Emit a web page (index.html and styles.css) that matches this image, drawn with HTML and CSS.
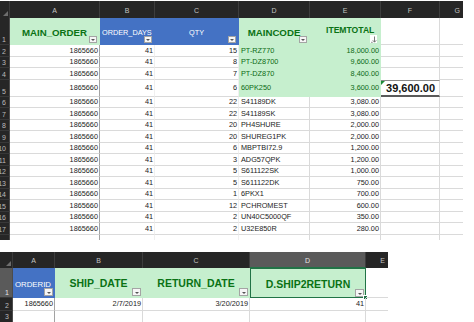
FILE: index.html
```html
<!DOCTYPE html>
<html>
<head>
<meta charset="utf-8">
<link rel="stylesheet" href="styles.css">
</head>
<body>
<div class="sheet top">
  <div class="corner"></div>
  <div class="ch">A</div><div class="ch">B</div><div class="ch">C</div><div class="ch">D</div><div class="ch">E</div><div class="ch">F</div><div class="ch chend">G</div>

  <div class="rh"><span>1</span></div>
  <div class="c g hdr colA">MAIN_ORDER<i class="drop"></i></div>
  <div class="c bl lbl">ORDER_DAYS<i class="drop"></i></div>
  <div class="c bl lbl ctr">QTY<i class="drop"></i></div>
  <div class="c g hdr">MAINCODE<i class="drop"></i></div>
  <div class="c g hdr small">ITEMTOTAL<i class="sort"><svg width="6" height="7" viewBox="0 0 6 7"><path d="M3.5 0.5V6M1.8 4.3L3.5 6.2L5.2 4.3M0.2 6.3H1.6" stroke="#6b6b6b" stroke-width="0.9" fill="none"/></svg></i></div>
  <div class="c"></div><div class="c end"></div>

  <div class="rh"><span>2</span></div>
  <div class="c num colA">1865660</div><div class="c num fa">41</div><div class="c num fa">15</div><div class="c g">PT-RZ770</div><div class="c g num">18,000.00</div><div class="c"></div><div class="c end"></div>

  <div class="rh"><span>3</span></div>
  <div class="c num colA">1865660</div><div class="c num fa">41</div><div class="c num fa">8</div><div class="c g">PT-DZ8700</div><div class="c g num">9,600.00</div><div class="c"></div><div class="c end"></div>

  <div class="rh"><span>4</span></div>
  <div class="c num colA">1865660</div><div class="c num fa">41</div><div class="c num fa">7</div><div class="c g">PT-DZ870</div><div class="c g num">8,400.00</div><div class="c fbot"></div><div class="c end"></div>

  <div class="rh"><span>5</span></div>
  <div class="c num colA">1865660</div><div class="c num fa">41</div><div class="c num fa">6</div><div class="c g">60PK250</div><div class="c g num">3,600.00</div><div class="c num total"><i class="tri"></i>39,600.00</div><div class="c end"></div>

  <div class="rh"><span>6</span></div>
  <div class="c num colA">1865660</div><div class="c num fa">41</div><div class="c num fa">22</div><div class="c">S41189DK</div><div class="c num">3,080.00</div><div class="c"></div><div class="c end"></div>

  <div class="rh"><span>7</span></div>
  <div class="c num colA">1865660</div><div class="c num fa">41</div><div class="c num fa">22</div><div class="c">S41189SK</div><div class="c num">3,080.00</div><div class="c"></div><div class="c end"></div>

  <div class="rh"><span>8</span></div>
  <div class="c num colA">1865660</div><div class="c num fa">41</div><div class="c num fa">20</div><div class="c">PH4SHURE</div><div class="c num">2,000.00</div><div class="c"></div><div class="c end"></div>

  <div class="rh"><span>9</span></div>
  <div class="c num colA">1865660</div><div class="c num fa">41</div><div class="c num fa">20</div><div class="c">SHUREG1PK</div><div class="c num">2,000.00</div><div class="c"></div><div class="c end"></div>

  <div class="rh"><span>10</span></div>
  <div class="c num colA">1865660</div><div class="c num fa">41</div><div class="c num fa">6</div><div class="c">MBPTBI72.9</div><div class="c num">1,200.00</div><div class="c"></div><div class="c end"></div>

  <div class="rh"><span>11</span></div>
  <div class="c num colA">1865660</div><div class="c num fa">41</div><div class="c num fa">3</div><div class="c">ADG57QPK</div><div class="c num">1,200.00</div><div class="c"></div><div class="c end"></div>

  <div class="rh"><span>12</span></div>
  <div class="c num colA">1865660</div><div class="c num fa">41</div><div class="c num fa">5</div><div class="c">S611122SK</div><div class="c num">1,000.00</div><div class="c"></div><div class="c end"></div>

  <div class="rh"><span>13</span></div>
  <div class="c num colA">1865660</div><div class="c num fa">41</div><div class="c num fa">5</div><div class="c">S611122DK</div><div class="c num">750.00</div><div class="c"></div><div class="c end"></div>

  <div class="rh"><span>14</span></div>
  <div class="c num colA">1865660</div><div class="c num fa">41</div><div class="c num fa">1</div><div class="c">6PKX1</div><div class="c num">700.00</div><div class="c"></div><div class="c end"></div>

  <div class="rh"><span>15</span></div>
  <div class="c num colA">1865660</div><div class="c num fa">41</div><div class="c num fa">12</div><div class="c">PCHROMEST</div><div class="c num">600.00</div><div class="c"></div><div class="c end"></div>

  <div class="rh"><span>16</span></div>
  <div class="c num colA">1865660</div><div class="c num fa">41</div><div class="c num fa">2</div><div class="c">UN40C5000QF</div><div class="c num">350.00</div><div class="c"></div><div class="c end"></div>

  <div class="rh"><span>17</span></div>
  <div class="c num colA">1865660</div><div class="c num fa">41</div><div class="c num fa">2</div><div class="c">U32E850R</div><div class="c num">280.00</div><div class="c"></div><div class="c end"></div>

  <div class="rh rhcut"></div>
  <div class="c colA nb"></div><div class="c fa nb"></div><div class="c fa nb"></div><div class="c nb"></div><div class="c nb"></div><div class="c nb"></div><div class="c end nb"></div>
</div>

<div class="sheet bottom">
  <div class="corner"></div>
  <div class="ch">A</div><div class="ch">B</div><div class="ch">C</div><div class="ch sel">D</div><div class="ch chend">E</div>

  <div class="rh rhsel"><span>1</span></div>
  <div class="c bl lbl lbl2">ORDERID<i class="drop big"></i></div>
  <div class="c g hdr hdr2">SHIP_DATE<i class="drop big"></i></div>
  <div class="c g hdr hdr2">RETURN_DATE<i class="drop big"></i></div>
  <div class="c g hdr hdr2 active">D.SHIP2RETURN<i class="drop big"></i><i class="handle"></i></div>
  <div class="c end"></div>

  <div class="rh"><span>2</span></div>
  <div class="c num colA">1865660</div><div class="c num">2/7/2019</div><div class="c num">3/20/2019</div><div class="c num">41</div><div class="c end"></div>

  <div class="rh rhlast"><span>3</span></div>
  <div class="c colA nb"></div><div class="c nb"></div><div class="c nb"></div><div class="c nb"></div><div class="c end nb"></div>
</div>
</body>
</html>
```
FILE: styles.css
```css
html, body {
  margin: 0;
  padding: 0;
  background: #ffffff;
}

body {
  font-family: "Liberation Sans", Arial, sans-serif;
  color: #1c1c1c;
}

.sheet {
  display: grid;
  box-sizing: border-box;
}

.top {
  margin-top: 1px;
  width: 463px;
  grid-template-columns: 10px 90px 55px 84px 71px 71px 59px 23px;
  grid-template-rows: 17px 27px 12px 11px 12px 17px repeat(6, 11px 12px) 5px;
}

.bottom {
  margin-top: 12px;
  width: 388px;
  grid-template-columns: 13px 42px 88px 107px 116px 22px;
  grid-template-rows: 16px 30px 13px 11px;
}

/* header bar */
.corner {
  background: #262626;
  position: relative;
  border-right: 1px solid #3a3a3a;
  box-sizing: border-box;
}
.corner::after {
  content: "";
  position: absolute;
  right: 1px;
  bottom: 2px;
  width: 0;
  height: 0;
  border-left: 5px solid transparent;
  border-bottom: 5px solid #6d6d6d;
}

.ch {
  background: #262626;
  color: #c4c4c4;
  font-size: 7px;
  display: flex;
  align-items: center;
  justify-content: center;
  border-right: 1px solid #3d3d3d;
  box-sizing: border-box;
  padding-top: 1px;
}
.ch.chend {
  justify-content: flex-end;
  padding-right: 3px;
  border-right: none;
}
.ch.sel {
  background: #5a5a5a;
  color: #e6e6e6;
  border-bottom: 1px solid #217346;
}

/* row header strip */
.rh {
  background: #262626;
  color: #bcbcbc;
  font-size: 7px;
  display: flex;
  align-items: flex-end;
  justify-content: flex-end;
  padding: 0 3px 1px 2px;
  overflow: hidden;
  box-sizing: border-box;
  border-bottom: 1px solid #383838;
  border-right: 1px solid #4c4c4c;
  line-height: 1;
}
.rh span {
  white-space: nowrap;
}
.rh.rhcut {
  border-bottom: none;
}
.rh.rhlast {
  align-items: center;
  border-bottom: none;
  padding-bottom: 0;
}
.rhsel {
  background: #5a5a5a;
  color: #e6e6e6;
}

/* cells */
.c {
  box-sizing: border-box;
  border-right: 1px solid #dadada;
  border-bottom: 1px solid #dadada;
  font-size: 7.3px;
  display: flex;
  align-items: center;
  padding: 0 2px 0 2px;
  white-space: nowrap;
  overflow: hidden;
  position: relative;
  line-height: 1;
}
.c.num {
  justify-content: flex-end;
  padding-right: 1px;
}
.c.colA {
  border-right-color: #a3a3a3;
}
.c.fa {
  border-right-color: #f0f0f0;
}
.c.end {
  border-right: none;
}
.c.nb {
  border-bottom: none;
}

.g {
  background: #c6efce;
  color: #0b6b14;
  border-color: #c6efce !important;
}
.bl {
  background: #4472c4;
  color: #ffffff;
  border-color: #4472c4 !important;
}
.hdr {
  font-weight: bold;
  font-size: 9.7px;
  justify-content: center;
  padding-top: 3px;
  color: #0a7215;
}
.hdr.small {
  font-size: 8.6px;
  padding-top: 0;
  padding-left: 16px;
  padding-bottom: 1px;
  justify-content: flex-start;
}
.hdr2 {
  font-size: 10.5px;
  padding-top: 2px;
}
.lbl {
  font-size: 7.3px;
  padding-top: 3px;
  padding-left: 2px;
}
.lbl.ctr {
  justify-content: center;
}
.lbl2 {
  font-size: 7.8px;
  padding-top: 4px;
  padding-left: 2px;
}

.active {
  border: 1px solid #217346 !important;
  overflow: visible;
}
.handle {
  position: absolute;
  right: -3px;
  bottom: -3px;
  width: 3px;
  height: 3px;
  background: #217346;
  border: 1px solid #ffffff;
}

/* filter dropdown buttons */
.drop {
  position: absolute;
  right: 2px;
  bottom: 1px;
  width: 8px;
  height: 7px;
  box-sizing: border-box;
  background: #f6f6f6;
  border: 1px solid #a4a4a4;
}
.drop::after {
  content: "";
  position: absolute;
  left: 1px;
  top: 2px;
  width: 0;
  height: 0;
  border-left: 2px solid transparent;
  border-right: 2px solid transparent;
  border-top: 2px solid #555555;
}
.drop.big {
  width: 9px;
  height: 8px;
  right: 1px;
  bottom: 1px;
}
.drop.big::after {
  left: 1.5px;
  top: 2.5px;
}
.active .drop.big {
  right: 1px;
  bottom: 0px;
}

.sort {
  position: absolute;
  right: 3px;
  bottom: 1px;
  width: 7px;
  height: 8px;
  background: #ffffff;
  display: flex;
  align-items: center;
  justify-content: center;
}

/* total cell */
.total {
  font-weight: bold;
  font-size: 11px;
  color: #111111;
  border-top: 1px solid #8a8a8a;
  border-bottom: 2px solid #5a5a5a !important;
  padding-right: 4px !important;
}
.fbot {
  border-bottom: none;
}
.tri {
  position: absolute;
  left: 0;
  top: 0;
  width: 0;
  height: 0;
  border-top: 4px solid #1e8c3a;
  border-right: 4px solid transparent;
}
```
